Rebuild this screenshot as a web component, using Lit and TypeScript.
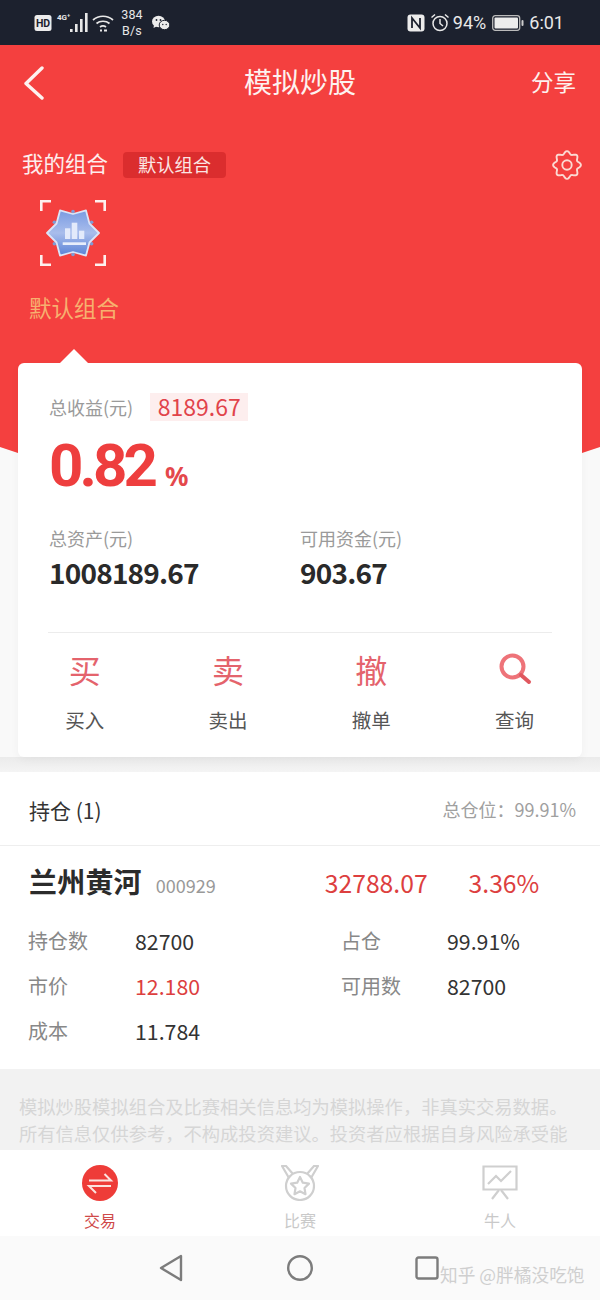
import { LitElement, html, css, svg } from "lit";
import { customElement } from "lit/decorators.js";

const gearPath = (() => {
  const pts: string[] = [];
  for (let i = 0; i < 96; i++) {
    const t = (i / 96) * Math.PI * 2;
    const r = 12.4 + 1.5 * Math.cos(8 * t);
    pts.push(`${(15 + r * Math.sin(t)).toFixed(2)} ${(15 - r * Math.cos(t)).toFixed(2)}`);
  }
  return "M" + pts.join("L") + "Z";
})();

const starPath = (() => {
  const pts: string[] = [];
  for (let i = 0; i < 12; i++) {
    const a = (i * Math.PI) / 6;
    const r = i % 2 === 0 ? 26 : 19;
    pts.push(`${(33 + r * Math.cos(a)).toFixed(2)} ${(33 + r * Math.sin(a)).toFixed(2)}`);
  }
  return "M" + pts.join("L") + "Z";
})();

const starDots = [30, 90, 150, 210, 270, 330].map((d) => {
  const a = (d * Math.PI) / 180;
  return [33 + 21.5 * Math.cos(a), 33 + 21.5 * Math.sin(a)];
});

@customElement("app-root")
export class AppRoot extends LitElement {
  static styles = css`
    :host { display: block; width: 600px; height: 1300px; overflow: hidden; position: relative; background: #f9f9f9; font-family: "Noto Sans CJK SC", "Noto Sans", sans-serif; }
    * { box-sizing: border-box; }
    svg { display: block; }
    .status { height: 45px; background: #1c212e; color: #e8e8e8; display: flex; align-items: center; padding: 0 36px 0 34px; position: relative; z-index: 3; }
    .status .left { display: flex; align-items: center; }
    .status .right { margin-left: auto; display: flex; align-items: center; }
    .speed { font: 12.5px/16px Roboto, sans-serif; text-align: center; width: 24px; margin-left: 6px; margin-right: 8px; letter-spacing: .2px; }
    .pct { font: 18px Roboto, sans-serif; margin-left: 3px; margin-right: 6px; }
    .time { font: 18px Roboto, sans-serif; margin-left: 5px; }

    .hero { height: 408px; background: #f4403f; clip-path: polygon(0 0, 100% 0, 100% 402px, 582px 408px, 18px 408px, 0 402px); color: #fff; }
    .nav { height: 76px; display: flex; align-items: center; justify-content: space-between; padding: 0 24px 0 24px; position: relative; }
    .nav .title { position: absolute; left: 0; right: 0; text-align: center; font-size: 28px; line-height: 72px; top: 0; color: #fdf2f0; }
    .nav .share { font-size: 22.5px; line-height: 32px; margin-bottom: 5px; color: #fdf0ee; position: relative; }
    .group-row { display: flex; align-items: center; padding: 28px 18px 0 22px; }
    .group-row .l { font-size: 21.5px; line-height: 28px; padding-bottom: 4px; color: #fdeeee; }
    .tag { margin-left: 15px; width: 103px; height: 26px; border-radius: 4px; background: #db2d2e; font-size: 18.3px; line-height: 24px; text-align: center; color: #fbe6e4; }
    .gear { margin-left: auto; }
    .badge { margin: 19px 0 0 40px; width: 66px; height: 66px; position: relative; }
    .badge-name { margin: 25px 0 0 29px; font-size: 22.5px; line-height: 32px; color: #f7b06f; }

    .card { position: relative; z-index: 2; margin: -90px 18px 0; height: 394px; background: #fff; border-radius: 6px; box-shadow: 0 3px 10px rgba(0,0,0,.04); padding: 29px 30px 0 31px; }
    .card::before { content: ""; position: absolute; left: 42px; top: -14px; border-left: 14px solid transparent; border-right: 14px solid transparent; border-bottom: 14px solid #fff; }
    .gain-row { display: flex; align-items: center; height: 30px; }
    .lab { font-size: 18px; color: #9a9a9a; line-height: 26px; }
    .gain-val { margin-left: 17px; background: #fdeeee; color: #e1434a; font-size: 23px; line-height: 27px; padding: 0 7.5px; height: 28px; }
    .pctline { display: flex; align-items: baseline; margin-top: 12px; height: 64px; color: #ee3e3e; }
    .pctline b { font: 700 60px/64px Roboto, sans-serif; letter-spacing: -3.9px; }
    .pctline span { font: 700 26px "Noto Sans", sans-serif; margin-left: 11px; color: #e4484c; }
    .assets { display: grid; grid-template-columns: 251px 1fr; margin-top: 27px; }
    .assets .num { font-size: 28px; font-weight: 700; line-height: 36px; color: #2a2a2a; margin-top: 3px; letter-spacing: -.8px; }
    .sep { height: 1px; background: #ececec; margin: 42px 0 0 -1px; }
    .acts { display: grid; grid-template-columns: repeat(4, 143.3px); margin: 0 0 0 -36px; }
    .act { display: flex; flex-direction: column; align-items: center; }
    .act .ic { height: 38px; margin-top: 17px; font-size: 32px; line-height: 38px; color: #e4636c; display: flex; align-items: center; justify-content: center; }
    .act .tx { margin-top: 19px; font-size: 19.5px; line-height: 26px; color: #555; }

    .gap { height: 15px; background: linear-gradient(#ebebeb, #f4f4f4); }
    .pos { background: #fff; height: 297px; }
    .pos-head { height: 74px; display: flex; align-items: center; justify-content: space-between; padding: 0 24px 0 29px; border-bottom: 1px solid #eeeeee; }
    .pos-head .t { font-size: 21px; line-height: 30px; margin-top: 2px; color: #333; }
    .pos-head .r { font-size: 18px; line-height: 26px; color: #a0a0a0; }
    .stock { display: flex; align-items: baseline; height: 76px; padding: 14px 0 0 29px; }
    .stock .name { font-size: 28px; font-weight: 700; color: #2b2b2b; line-height: 42px; letter-spacing: .2px; }
    .stock .code { font-size: 18px; color: #999; margin-left: 14px; width: 169px; }
    .stock .v { font-size: 24.7px; color: #dd3f3f; }
    .stock .v.b { margin-left: 41px; }
    .grid { display: grid; grid-template-columns: 107px 206px 106px 1fr; padding: 4px 0 0 28px; row-gap: 15px; }
    .grid div { line-height: 30px; height: 30px; }
    .grid .k { font-size: 20px; color: #888; }
    .grid .n { font-size: 21.3px; color: #333; }
    .grid .n.red { color: #dd3f3f; }

    .disc { height: 81px; overflow: hidden; padding: 24px 10px 0 19px; font-size: 18.3px; line-height: 27px; color: #d6d6d6; white-space: nowrap; background: #f2f2f2; }

    .tabs { height: 86px; background: #fff; display: grid; grid-template-columns: repeat(3, 200px); position: relative; z-index: 2; }
    .tab { display: flex; flex-direction: column; align-items: center; padding-top: 15px; }
    .tab .ti { height: 36px; }
    .tab .tt { font-size: 16px; line-height: 24px; margin-top: 7px; color: #c9c9c9; }
    .tab.on .tt { color: #cf4a4a; }

    .sys { height: 64px; background: #fafafa; display: grid; grid-template-columns: 172px 128px 127px 1fr; align-items: center; position: relative; }
    .wm { position: absolute; left: 440px; top: 26px; font-size: 17.7px; line-height: 24px; color: #cfcfcf; white-space: nowrap; }
  `;

  render() {
    return html`
      <div class="status">
        <div class="left">
          <svg width="18" height="16" viewBox="0 0 18 16"><rect x=".5" y="0" width="17" height="16" rx="2.5" fill="#ececec"/><text x="9" y="12" text-anchor="middle" font-family="Roboto" font-weight="700" font-size="10.5" fill="#1c212e">HD</text></svg>
          <svg width="34" height="24" viewBox="0 0 34 24" style="margin-left:4px"><text x="1" y="9" font-family="Roboto" font-weight="700" font-size="8" fill="#e8e8e8">4G⁺</text><g fill="#e8e8e8"><rect x="14" y="18" width="2.6" height="3"/><rect x="19" y="13" width="2.6" height="8"/><rect x="24" y="8" width="2.6" height="13"/><rect x="29" y="2" width="2.6" height="19"/></g></svg>
          <svg width="22" height="18" viewBox="0 0 22 18" style="margin-left:2px" fill="none" stroke="#e8e8e8" stroke-width="1.7"><path d="M1 6 C6.500 1 15.500 1 21 6"/><path d="M4.500 9.500 C8 6.500 14 6.500 17.500 9.500"/><path d="M8 13 C9.800 11.600 12.200 11.600 14 13"/><path d="M8 16.500h2M12 16.500h3" stroke-width="2"/></svg>
          <div class="speed">384<br />B/s</div>
          <svg width="18" height="16" viewBox="0 0 18 16" fill="#ececec"><ellipse cx="6.500" cy="6.500" rx="6.500" ry="5.800"/><path d="M2 10l-.5 3 3-1.500z"/><ellipse cx="12.500" cy="10" rx="5.300" ry="4.700" stroke="#1c212e" stroke-width="1"/><circle cx="4.500" cy="5" r=".9" fill="#1c212e"/><circle cx="8.500" cy="5" r=".9" fill="#1c212e"/><circle cx="10.800" cy="9.500" r=".7" fill="#1c212e"/><circle cx="14.200" cy="9.500" r=".7" fill="#1c212e"/></svg>
        </div>
        <div class="right">
          <svg width="18" height="18" viewBox="0 0 18 18"><rect x="0.500" y="0.500" width="17" height="17" rx="3" fill="#ececec"/><path d="M5 14V4l8 10V4" fill="none" stroke="#1c212e" stroke-width="1.800"/></svg>
          <svg width="20" height="19" viewBox="0 0 20 19" fill="none" stroke="#e8e8e8" stroke-width="1.500" style="margin-left:5px"><circle cx="10" cy="10.500" r="7"/><path d="M10 6v4.500l3 2.500"/><path d="M1.500 4.500 5 1.500M18.500 4.500 15 1.500"/></svg>
          <span class="pct">94%</span>
          <svg width="32" height="16" viewBox="0 0 32 16"><rect x=".7" y=".7" width="27" height="14.600" rx="2.500" fill="none" stroke="#bbb" stroke-width="1.300"/><rect x="2.500" y="2.500" width="23.500" height="11" rx="1" fill="#ececec"/><rect x="29.500" y="5" width="2" height="6" rx="1" fill="#ccc"/></svg>
          <span class="time">6:01</span>
        </div>
      </div>

      <div class="hero">
        <div class="nav">
          <svg width="20" height="34" viewBox="0 0 20 34" fill="none" stroke="#fdf2f0" stroke-width="3.400" stroke-linecap="round" stroke-linejoin="round"><path d="M18 2 2 17.500 18 32"/></svg>
          <span class="title">模拟炒股</span>
          <span class="share">分享</span>
        </div>
        <div class="group-row">
          <span class="l">我的组合</span>
          <span class="tag">默认组合</span>
          <svg class="gear" width="30" height="30" viewBox="0 0 30 30" fill="none" stroke="#fbd9d2" stroke-width="1.900" stroke-linejoin="round">
            <path d=${gearPath}/>
            <circle cx="15" cy="15" r="4.700"/>
          </svg>
        </div>
        <div class="badge">
          <svg width="66" height="66" viewBox="0 0 66 66">
            <g fill="none" stroke="#fdf0ee" stroke-width="2.600"><path d="M11 1.300H1.300V11M55 1.300h9.700V11M11 64.700H1.300V55M55 64.700h9.700V55"/></g>
            <defs><linearGradient id="bg" x1="0" y1="0" x2="0" y2="1"><stop offset="0" stop-color="#7a9be2"/><stop offset=".5" stop-color="#a9bdec"/><stop offset="1" stop-color="#5a82d6"/></linearGradient></defs>
            ${starDots.map(([x, y]) => svg`<circle cx=${x} cy=${y} r="1.800" fill="#7f9bd6"/>`)}
            <path d=${starPath} fill="url(#bg)" stroke="#dbe5f8" stroke-width="1.800" stroke-linejoin="round"/>
            <g fill="#e3eafb"><rect x="25" y="28.300" width="5.300" height="10.700"/><rect x="31.700" y="22.700" width="5.600" height="16.300"/><rect x="39" y="30.700" width="5.300" height="8.300"/></g>
            <rect x="22.700" y="42.300" width="23.300" height="2.700" fill="#e8eefb"/>
          </svg>
        </div>
        <div class="badge-name">默认组合</div>
      </div>

      <div class="card">
        <div class="gain-row"><span class="lab">总收益(元)</span><span class="gain-val">8189.67</span></div>
        <div class="pctline"><b>0.82</b><span>%</span></div>
        <div class="assets">
          <div><div class="lab">总资产(元)</div><div class="num">1008189.67</div></div>
          <div><div class="lab">可用资金(元)</div><div class="num">903.67</div></div>
        </div>
        <div class="sep"></div>
        <div class="acts">
          <div class="act"><div class="ic">买</div><div class="tx">买入</div></div>
          <div class="act"><div class="ic">卖</div><div class="tx">卖出</div></div>
          <div class="act"><div class="ic">撤</div><div class="tx">撤单</div></div>
          <div class="act"><div class="ic"><svg width="34" height="34" viewBox="0 0 34 34" fill="none" stroke="#ee7379" stroke-width="4"><circle cx="14.500" cy="14.500" r="11"/><path d="M23 23l8 7" stroke="#e0585f" stroke-linecap="round"/></svg></div><div class="tx">查询</div></div>
        </div>
      </div>

      <div class="gap"></div>
      <div class="pos">
        <div class="pos-head"><span class="t">持仓 (1)</span><span class="r">总仓位：99.91%</span></div>
        <div class="stock"><span class="name">兰州黄河</span><span class="code">000929</span><span class="v">32788.07</span><span class="v b">3.36%</span></div>
        <div class="grid">
          <div class="k">持仓数</div><div class="n">82700</div><div class="k">占仓</div><div class="n">99.91%</div>
          <div class="k">市价</div><div class="n red">12.180</div><div class="k">可用数</div><div class="n">82700</div>
          <div class="k">成本</div><div class="n">11.784</div>
        </div>
      </div>

      <div class="disc">模拟炒股模拟组合及比赛相关信息均为模拟操作，非真实交易数据。<br />所有信息仅供参考，不构成投资建议。投资者应根据自身风险承受能</div>

      <div class="tabs">
        <div class="tab on"><div class="ti"><svg width="36" height="36" viewBox="0 0 36 36"><circle cx="18" cy="18" r="18" fill="#ee3c38"/><g fill="none" stroke="#fbe3df" stroke-width="2"><path d="M7 15.500h22L22.500 9"/><path d="M29 21H7l7 7"/></g></svg></div><div class="tt">交易</div></div>
        <div class="tab"><div class="ti"><svg width="38" height="36" viewBox="0 0 38 36" fill="none" stroke="#cfcfcf" stroke-width="2.200" stroke-linejoin="round"><circle cx="19" cy="21" r="14"/><path d="M12 9 5 1h-4l7 12M26 9l7-8h4l-7 12"/><path d="M19 12l2.800 5.700 6.200.9-4.500 4.400 1 6.200-5.500-2.900-5.500 2.900 1-6.200-4.500-4.400 6.200-.9z"/></svg></div><div class="tt">比赛</div></div>
        <div class="tab"><div class="ti"><svg width="36" height="36" viewBox="0 0 36 36" fill="none" stroke="#cfcfcf" stroke-width="2.200"><path d="M1.500 1.500h33v23h-33z"/><path d="M6 19l8-8 5 5 10-10M10 34l7-9M26 34l-7-9"/></svg></div><div class="tt">牛人</div></div>
      </div>

      <div class="sys">
        <span></span>
        <svg width="24" height="28" viewBox="0 0 24 28" fill="none" stroke="#7c7c7c" stroke-width="2.400" stroke-linejoin="round" style="margin-left:-13px"><path d="M22 2v24L2 14z"/></svg>
        <svg width="26" height="26" viewBox="0 0 26 26" fill="none" stroke="#7c7c7c" stroke-width="2.400" style="margin-left:-13px"><circle cx="13" cy="13" r="11.800"/></svg>
        <svg width="24" height="24" viewBox="0 0 24 24" fill="none" stroke="#7c7c7c" stroke-width="2.400" style="margin-left:-12px"><rect x="1.500" y="1.500" width="21" height="21" rx="2"/></svg>
        <span class="wm">知乎 @胖橘没吃饱</span>
      </div>
    `;
  }
}
